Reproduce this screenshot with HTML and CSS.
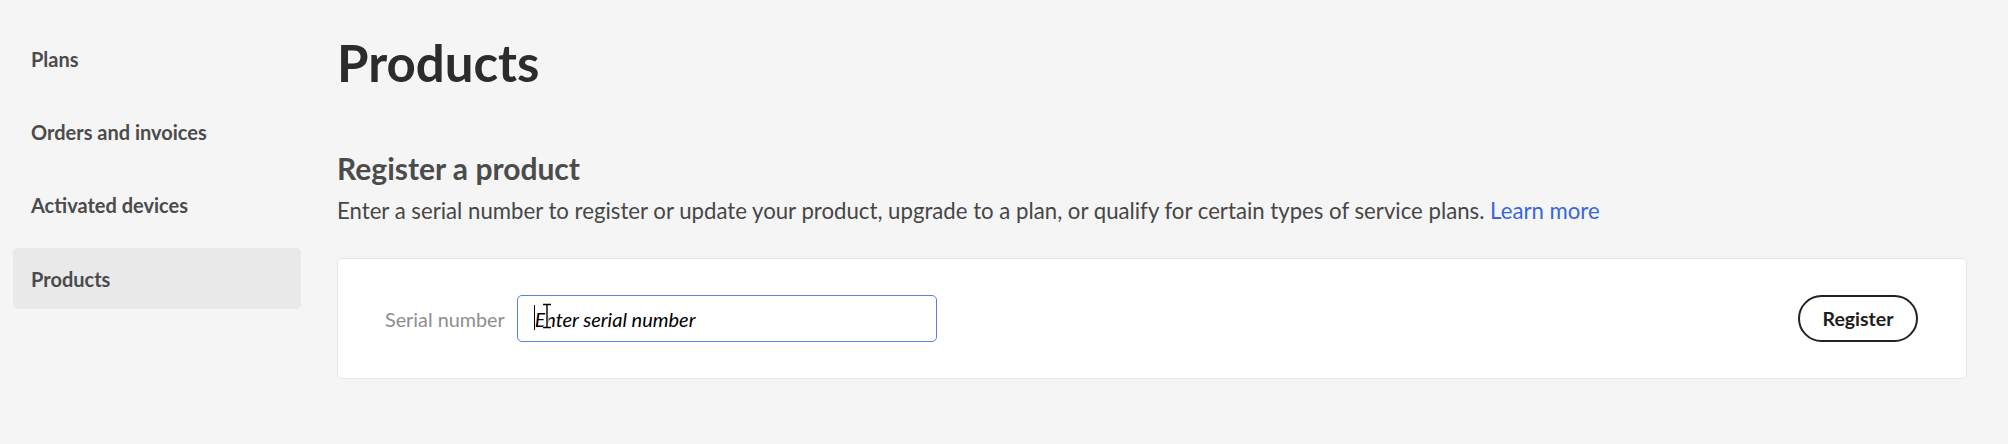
FILE: index.html
```html
<!DOCTYPE html>
<html lang="en">
<head>
<meta charset="utf-8">
<title>Products</title>
<link rel="stylesheet" href="styles.css">
</head>
<body>
<div class="page">
  <nav class="sidebar">
    <a class="nav-item" href="#">Plans</a>
    <a class="nav-item" href="#">Orders and invoices</a>
    <a class="nav-item" href="#">Activated devices</a>
    <a class="nav-item active" href="#">Products</a>
  </nav>
  <main class="main">
    <h1 class="title">Products</h1>
    <h2 class="subtitle">Register a product</h2>
    <p class="desc">Enter a serial number to register or update your product, upgrade to a plan, or qualify for certain types of service plans. <a class="link" href="#">Learn more</a></p>
    <section class="card">
      <label class="label" for="serial">Serial number</label>
      <div class="field">
        <input id="serial" class="input" type="text" placeholder="Enter serial number">
        <span class="caret"></span>
        <svg class="ibeam" width="12" height="26" viewBox="0 0 12 26" aria-hidden="true">
          <path d="M2 1.5h8M6 1.5v23M2 24.5h8" stroke="#fff" stroke-width="3.2" fill="none"/>
          <path d="M2 1.5h8M6 1.5v23M2 24.5h8" stroke="#000" stroke-width="1.4" fill="none"/>
        </svg>
      </div>
      <button class="btn" type="button">Register</button>
    </section>
  </main>
</div>
</body>
</html>
```

FILE: styles.css
```css
html, body {
  margin: 0;
  padding: 0;
  background: #f5f5f5;
}
body {
  font-family: Lato, "Open Sans", "Noto Sans", sans-serif;
  color: #4b4b4b;
  width: 2008px;
  height: 444px;
  overflow: hidden;
}
.page {
  display: flex;
  gap: 36px;
  padding: 0 41px 0 13px;
}
.sidebar {
  width: 288px;
  flex: none;
  display: flex;
  flex-direction: column;
  gap: 12.4px;
  padding-top: 28px;
}
.nav-item {
  display: flex;
  align-items: center;
  height: 61px;
  padding-left: 18px;
  border-radius: 5px;
  font-size: 20px;
  font-weight: 700;
  color: #4b4b4b;
  text-decoration: none;
}
.nav-item.active {
  background: #e9e9e9;
}
.main {
  flex: 1;
  min-width: 0;
}
.title {
  margin: 33px 0 0;
  font-size: 51px;
  line-height: 60px;
  font-weight: 700;
  color: #2c2c2c;
}
.subtitle {
  margin: 57px 0 0;
  font-size: 30px;
  line-height: 36px;
  font-weight: 700;
  color: #4b4b4b;
}
.desc {
  margin: 9px 0 0;
  font-size: 22.2px;
  line-height: 31px;
  color: #464646;
}
.link {
  color: #3a67d6;
  text-decoration: none;
}
.card {
  margin-top: 32px;
  height: 121px;
  box-sizing: border-box;
  background: #fff;
  border: 1px solid #e6e6e6;
  border-radius: 5px;
  display: flex;
  align-items: center;
  padding: 0 48px 0 47px;
}
.label {
  font-size: 19.8px;
  color: #8e8e8e;
  margin-right: 12px;
}
.field {
  position: relative;
  width: 420px;
  height: 47px;
}
.input {
  width: 100%;
  height: 100%;
  box-sizing: border-box;
  border: 1px solid #5a82df;
  border-radius: 5px;
  padding: 0 0 0 17px;
  font-family: Lato, "Open Sans", sans-serif;
  font-size: 20px;
  font-style: italic;
  color: #000;
  background: #fff;
  outline: none;
}
.input::placeholder {
  color: #000;
  font-style: italic;
  opacity: 1;
}
.caret {
  position: absolute;
  left: 17px;
  top: 10px;
  width: 1px;
  height: 25px;
  background: #000;
}
.ibeam {
  position: absolute;
  left: 24px;
  top: 8px;
}
.btn {
  margin-left: auto;
  width: 120px;
  height: 47px;
  box-sizing: border-box;
  border: 2.5px solid #222;
  border-radius: 24px;
  background: #fff;
  font-family: Lato, "Open Sans", sans-serif;
  font-size: 19.5px;
  font-weight: 700;
  color: #1d1d1d;
  padding: 0;
}
```
